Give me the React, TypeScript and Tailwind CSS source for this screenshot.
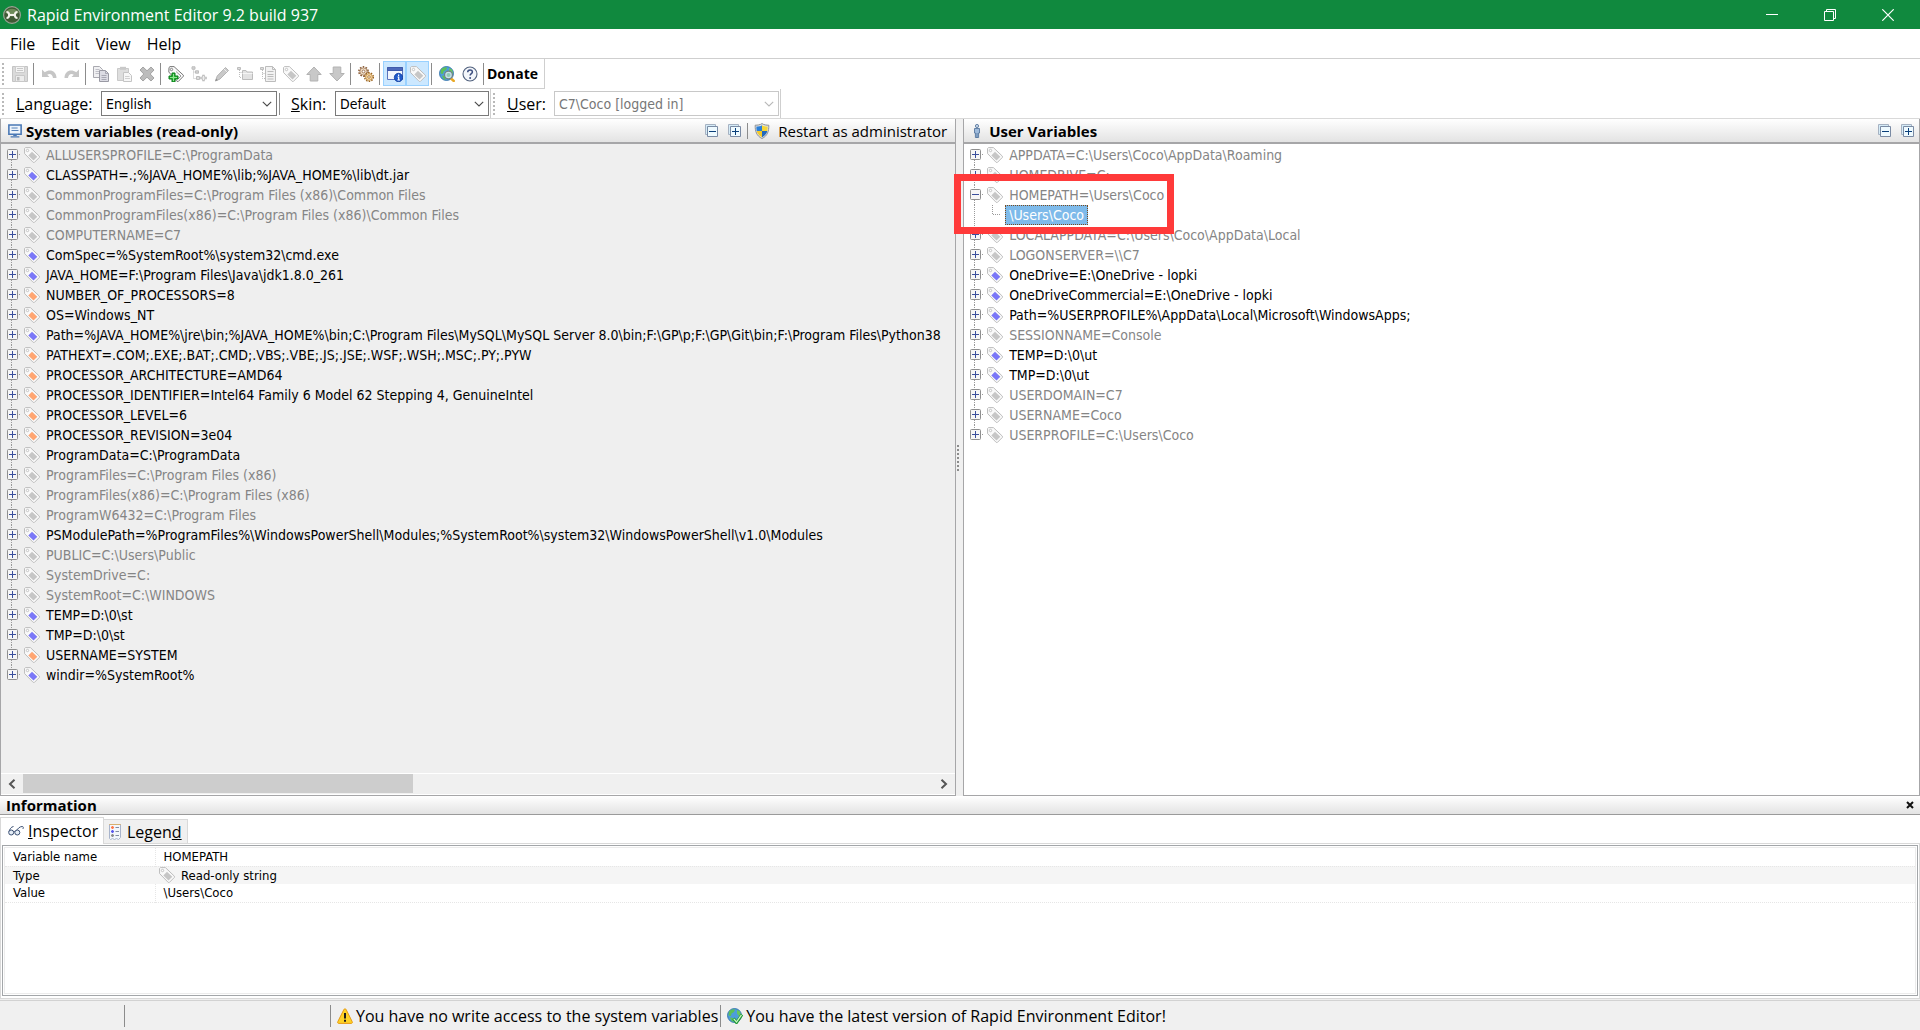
import type { ReactNode } from "react";
import clsx from "clsx";

type Kind = "readonly" | "expand" | "string" | "plain";

type Variable = {
  text: string;
  kind: Kind;
  value?: string;
};

const SYSTEM_VARIABLES: Variable[] = [
  { text: "ALLUSERSPROFILE=C:\\ProgramData", kind: "readonly" },
  { text: "CLASSPATH=.;%JAVA_HOME%\\lib;%JAVA_HOME%\\lib\\dt.jar", kind: "expand" },
  { text: "CommonProgramFiles=C:\\Program Files (x86)\\Common Files", kind: "readonly" },
  { text: "CommonProgramFiles(x86)=C:\\Program Files (x86)\\Common Files", kind: "readonly" },
  { text: "COMPUTERNAME=C7", kind: "readonly" },
  { text: "ComSpec=%SystemRoot%\\system32\\cmd.exe", kind: "expand" },
  { text: "JAVA_HOME=F:\\Program Files\\Java\\jdk1.8.0_261", kind: "expand" },
  { text: "NUMBER_OF_PROCESSORS=8", kind: "string" },
  { text: "OS=Windows_NT", kind: "string" },
  {
    text: "Path=%JAVA_HOME%\\jre\\bin;%JAVA_HOME%\\bin;C:\\Program Files\\MySQL\\MySQL Server 8.0\\bin;F:\\GP\\p;F:\\GP\\Git\\bin;F:\\Program Files\\Python38",
    kind: "expand",
  },
  { text: "PATHEXT=.COM;.EXE;.BAT;.CMD;.VBS;.VBE;.JS;.JSE;.WSF;.WSH;.MSC;.PY;.PYW", kind: "string" },
  { text: "PROCESSOR_ARCHITECTURE=AMD64", kind: "string" },
  { text: "PROCESSOR_IDENTIFIER=Intel64 Family 6 Model 62 Stepping 4, GenuineIntel", kind: "string" },
  { text: "PROCESSOR_LEVEL=6", kind: "string" },
  { text: "PROCESSOR_REVISION=3e04", kind: "string" },
  { text: "ProgramData=C:\\ProgramData", kind: "plain" },
  { text: "ProgramFiles=C:\\Program Files (x86)", kind: "readonly" },
  { text: "ProgramFiles(x86)=C:\\Program Files (x86)", kind: "readonly" },
  { text: "ProgramW6432=C:\\Program Files", kind: "readonly" },
  {
    text: "PSModulePath=%ProgramFiles%\\WindowsPowerShell\\Modules;%SystemRoot%\\system32\\WindowsPowerShell\\v1.0\\Modules",
    kind: "expand",
  },
  { text: "PUBLIC=C:\\Users\\Public", kind: "readonly" },
  { text: "SystemDrive=C:", kind: "readonly" },
  { text: "SystemRoot=C:\\WINDOWS", kind: "readonly" },
  { text: "TEMP=D:\\0\\st", kind: "expand" },
  { text: "TMP=D:\\0\\st", kind: "expand" },
  { text: "USERNAME=SYSTEM", kind: "string" },
  { text: "windir=%SystemRoot%", kind: "expand" },
];

const USER_VARIABLES: Variable[] = [
  { text: "APPDATA=C:\\Users\\Coco\\AppData\\Roaming", kind: "readonly" },
  { text: "HOMEDRIVE=C:", kind: "readonly" },
  { text: "HOMEPATH=\\Users\\Coco", kind: "readonly", value: "\\Users\\Coco" },
  { text: "LOCALAPPDATA=C:\\Users\\Coco\\AppData\\Local", kind: "readonly" },
  { text: "LOGONSERVER=\\\\C7", kind: "readonly" },
  { text: "OneDrive=E:\\OneDrive - lopki", kind: "expand" },
  { text: "OneDriveCommercial=E:\\OneDrive - lopki", kind: "expand" },
  { text: "Path=%USERPROFILE%\\AppData\\Local\\Microsoft\\WindowsApps;", kind: "expand" },
  { text: "SESSIONNAME=Console", kind: "readonly" },
  { text: "TEMP=D:\\0\\ut", kind: "expand" },
  { text: "TMP=D:\\0\\ut", kind: "expand" },
  { text: "USERDOMAIN=C7", kind: "readonly" },
  { text: "USERNAME=Coco", kind: "readonly" },
  { text: "USERPROFILE=C:\\Users\\Coco", kind: "readonly" },
];

const TAG_COLORS: Record<Kind, string> = {
  readonly: "#c6c6c6",
  plain: "#c6c6c6",
  expand: "#7a77f7",
  string: "#ffa571",
};

/* ── icons ── */

function Icon({ children, className = "size-4" }: { children: ReactNode; className?: string }) {
  return (
    <svg viewBox="0 0 16 16" fill="none" aria-hidden="true" className={clsx("shrink-0", className)}>
      {children}
    </svg>
  );
}

function TagIcon({ color = "#c6c6c6", stroke = "#bdbdbd" }: { color?: string; stroke?: string }) {
  return (
    <Icon>
      <path d="M.5 1.500 1.500.6 6.400.6 15.400 9.200 15.400 10.400 10.400 15.400 9.200 15.400.6 6.600Z" fill="#f9f9f9" stroke={stroke} />
      <circle cx="3.500" cy="3.500" r="1.200" fill="#fff" stroke={stroke} strokeWidth=".9" />
      <path d="m8 4.800 5.300 5-3.800 3.700-5.200-5.100Z" fill={color} />
    </Icon>
  );
}

function SaveIcon() {
  return (
    <Icon>
      <path d="M.5.5h15v15h-15Z" fill="#dadada" stroke="#c4c4c4" />
      <path d="M3.500.5h9v6h-9Z" fill="#f4f4f4" stroke="#ccc" />
      <path d="M5 2.500h6M5 4.500h6" stroke="#c8c8c8" />
      <path d="M3.500 9.500h9v6h-9Z" fill="#ececec" stroke="#c8c8c8" />
      <path d="M5 11h2.500v3.500H5Z" fill="#bdbdbd" />
    </Icon>
  );
}

function UndoIcon({ flip = false }: { flip?: boolean }) {
  return (
    <Icon className={clsx("size-4", flip && "-scale-x-100")}>
      <path d="M1 3.500V11h7.500L6.200 8.800C9 7.200 11.500 8.500 12 12h3.500C15.500 4.500 8.500 2.500 3.800 6.200Z" fill="#c6c6c6" />
    </Icon>
  );
}

function CopyIcon() {
  return (
    <Icon>
      <path d="M.5.5h6l3 3v8h-9Z" fill="#f0f0f2" stroke="#a9a9b0" />
      <path d="M2.500 3.500h4M2.500 5.500h5M2.500 7.500h5" stroke="#c0c0c8" />
      <path d="M6.500 4.500h6l3 3v8h-9Z" fill="#dcdce4" stroke="#9a9aa4" />
      <path d="M12.500 4.500v3h3M8.500 9.500h5M8.500 11.500h5M8.500 13.500h5" stroke="#a8a8b4" />
    </Icon>
  );
}

function PasteIcon() {
  return (
    <Icon>
      <path d="M1.500 2.500h11v12h-11Z" fill="#dedede" stroke="#c9c9c9" />
      <path d="M4 .8h6v3H4Z" fill="#c9c9c9" />
      <path d="M7.500 6.500h5l3 3v6h-8Z" fill="#f7f7f7" stroke="#c4c4c4" />
      <path d="M9 10.500h4.500M9 12.500h5" stroke="#d0d0d0" />
    </Icon>
  );
}

function DeleteIcon() {
  return (
    <Icon>
      <path
        d="M4 1 8 4.800 12 1l3 3-3.800 4 3.800 4-3 3-4-3.800L4 15l-3-3 3.800-4L1 4Z"
        fill="#bcbcbc"
        stroke="#a4a4a4"
      />
    </Icon>
  );
}

function AddTagIcon() {
  return (
    <Icon>
      <path d="M1 1.500 2 .6h4l9.400 8.600v1l-5 5.200H9L.8 6Z" fill="#fafafa" stroke="#777" />
      <circle cx="3.500" cy="3.500" r="1.200" stroke="#777" strokeWidth=".9" />
      <path d="M8 5.500 13 10l-3 3" stroke="#999" />
      <path d="M4 7h3v3h3v3H7v3H4v-3H1v-3h3Z" fill="#2bb638" stroke="#0b7d1a" />
      <path d="M5.500 8v7M2 11.500h7" stroke="#90e690" />
    </Icon>
  );
}

function AddChildIcon() {
  return (
    <Icon>
      <path d="M1 .8h3v2.400H1ZM4.500 4.800h3v2.400h-3Z" fill="#d4d4d4" stroke="#bdbdbd" />
      <path d="M2.500 3.500v9H5M2.500 6h2" stroke="#bdbdbd" strokeDasharray="1 1" />
      <path d="M5.500 10.500h3v3h-3Z" fill="#ddd" stroke="#bdbdbd" />
      <path d="M12.500 8.800v6.400M9.300 12h6.400" stroke="#b5b5b5" strokeWidth="2.400" />
      <path d="M12.500 9.800v4.400M10.300 12h4.400" stroke="#eee" />
    </Icon>
  );
}

function PencilIcon() {
  return (
    <Icon>
      <path d="m11.500 1.500 3 3L6 13l-4.500 2L3.200 10Z" fill="#c9c9c9" stroke="#b4b4b4" />
      <path d="m10 3 3 3" stroke="#eee" />
      <path d="m1.200 15.200 1-2.600 1.600 1.600Z" fill="#909090" />
    </Icon>
  );
}

function TreeFolderIcon() {
  return (
    <Icon>
      <path d="M.5 1.500h3v2h-3Z" fill="#ddd" stroke="#bdbdbd" />
      <path d="M2.500 4v7.500H5M2.500 6.500H5" stroke="#bdbdbd" strokeDasharray="1 1" />
      <path d="M5.500 4.500h3.500l1 1.500h5.500v7.500h-10Z" fill="#e2e2e2" stroke="#bcbcbc" />
      <path d="M5.500 7.500h10" stroke="#f5f5f5" />
    </Icon>
  );
}

function TreeListIcon() {
  return (
    <Icon>
      <path d="M.5 1.500h3v2h-3Z" fill="#ddd" stroke="#bdbdbd" />
      <path d="M2.500 4v8.500H5M2.500 7.500H5" stroke="#bdbdbd" strokeDasharray="1 1" />
      <path d="M5.500.5h7l3 3v12h-10Z" fill="#f2f2f2" stroke="#bcbcbc" />
      <path d="M12.500.5v3h3M7.500 5.500h6M7.500 8.500h6M7.500 10.500h6M7.500 13h6" stroke="#bcbcbc" />
    </Icon>
  );
}

function ArrowIcon({ down = false }: { down?: boolean }) {
  return (
    <Icon className={clsx("size-4", down && "rotate-180")}>
      <path d="m8 1 7.200 7.500h-3.400V15H4.200V8.500H.8Z" fill="#c8c8c8" stroke="#b2b2b2" />
    </Icon>
  );
}

function GearsIcon() {
  return (
    <Icon>
      <circle cx="5.500" cy="5.500" r="4.600" stroke="#8a5a34" strokeWidth="1.600" strokeDasharray="1.600 1.300" />
      <circle cx="5.500" cy="5.500" r="3.600" fill="#f0dcc4" stroke="#a07a58" strokeWidth=".8" />
      <circle cx="5.500" cy="5.500" r="1.400" fill="#fff" stroke="#8f6340" strokeWidth=".8" />
      <circle cx="11" cy="11" r="4.300" stroke="#9c6420" strokeWidth="1.500" strokeDasharray="1.500 1.200" />
      <circle cx="11" cy="11" r="3.400" fill="#fbd9a4" stroke="#b5843c" strokeWidth=".8" />
      <circle cx="11" cy="11" r="1.300" fill="#fff" stroke="#a06e2c" strokeWidth=".8" />
    </Icon>
  );
}

function InfoWindowIcon() {
  return (
    <Icon>
      <path d="M.5 1.500h15v12H.5Z" fill="#f3f6fd" stroke="#5a73bd" />
      <path d="M.5 1.500h15v3H.5Z" fill="#4d69bb" stroke="#405bab" />
      <circle cx="11.500" cy="11.500" r="4.200" fill="#2059c9" stroke="#123f9e" strokeWidth=".8" />
      <path d="M11.600 8.600v1.300M10.500 11h1.200v3M10.400 14h2.600" stroke="#fff" strokeWidth="1.200" />
    </Icon>
  );
}

function GlobeIcon({ badge }: { badge: "lens" | "check" }) {
  return (
    <Icon>
      <circle cx="7.500" cy="7.500" r="7" fill="#4d9ddb" stroke="#2a6ba5" strokeWidth=".8" />
      <path d="M2 3.500C4 1 7 .8 8 1.500L7 4 4.500 5.500 4 8 1.500 7.500Z" fill="#5cc058" />
      <path d="m10 2 3 1.500 1.200 4L12 8l-2-2.500Z" fill="#68c560" />
      <path d="m3 9.500 3 .5.500 4L4.500 13Z" fill="#5cc058" />
      {badge === "lens" ? (
        <>
          <path d="m12 12.500 2.800 2.500" stroke="#e9a825" strokeWidth="2.400" strokeLinecap="round" />
          <circle cx="9.500" cy="9" r="3.900" fill="#c7e3ea" stroke="#6f7f86" strokeWidth="1.200" />
          <circle cx="9.500" cy="9" r="2" fill="#8fc9b4" />
        </>
      ) : (
        <path d="m6.500 10.500 3 4 5.500-8" stroke="#1f9a35" strokeWidth="3" />
      )}
      {badge === "check" && <path d="m6.800 10.800 2.700 3.200 5-7.200" stroke="#c9f3c2" strokeWidth="1.300" />}
    </Icon>
  );
}

function HelpIcon() {
  return (
    <Icon>
      <circle cx="8" cy="8" r="7" fill="#f3f6fa" stroke="#51617e" strokeWidth="1.100" />
      <path
        d="M5.700 6.200C5.700 3.200 10.400 3.200 10.400 6c0 1.600-2.300 1.800-2.300 3.600"
        stroke="#3d4f80"
        strokeWidth="1.500"
      />
      <circle cx="8.100" cy="11.900" r="1" fill="#3d4f80" />
    </Icon>
  );
}

function CollapseIcon({ plus = false }: { plus?: boolean }) {
  return (
    <svg viewBox="0 0 13 13" fill="none" aria-hidden="true" className="size-[13px] shrink-0">
      <path d="M.5.5h10v10H.5Z" fill="#d5ecf8" stroke="#a6b2c2" />
      <path d="M2.500 2.500h10v10h-10Z" fill="#eefaff" stroke="#7a8ba4" />
      <path d="M4 7.500h7" stroke="#0a3f7a" />
      {plus && <path d="M7.500 4v7" stroke="#0a3f7a" />}
    </svg>
  );
}

function ShieldIcon() {
  return (
    <Icon>
      <path
        d="M8 .6C10 2 12.500 2.200 14.800 2.200 15 8 13.500 13 8 15.500 2.500 13 1 8 1.200 2.200 3.500 2.200 6 2 8 .6Z"
        fill="#e4e6e8"
        stroke="#8c9094"
      />
      <path d="M8 2.200V8H2.700C2.400 6.500 2.300 5 2.400 3.500 4.500 3.500 6.300 3.200 8 2.200Z" fill="#2a7fd8" />
      <path d="M8 2.200V8h5.300c.3-1.500.4-3 .3-4.500-2.100 0-3.900-.3-5.600-1.300Z" fill="#f6d637" />
      <path d="M2.700 8H8v6.300C5 12.800 3.400 10.700 2.700 8Z" fill="#f4c92a" />
      <path d="M13.300 8H8v6.300c3-1.500 4.600-3.600 5.300-6.300Z" fill="#2368bd" />
    </Icon>
  );
}

function MonitorIcon() {
  return (
    <Icon className="size-[14px]">
      <path d="M1 1.200h14v10.600H1Z" fill="#eef4fb" stroke="#4a78b5" strokeWidth="1.800" />
      <path d="M4 4.500h7M4 7.500h8" stroke="#5581ba" strokeWidth="1.200" />
      <path d="M6 12.500h4v1.200H6ZM3 14h10v1.400H3Z" fill="#4a78b5" />
    </Icon>
  );
}

function PersonIcon() {
  return (
    <svg viewBox="0 0 8 14" fill="none" aria-hidden="true" className="h-[14px] w-2 shrink-0">
      <circle cx="4" cy="2" r="1.600" fill="#c8d8ea" stroke="#4a6c95" strokeWidth=".8" />
      <path d="M1.500 4.500h5V9H5.600v4.500H2.400V9h-.9Z" fill="#9fbbdc" stroke="#4a6c95" strokeWidth=".8" />
      <path d="M4 9v4.500" stroke="#4a6c95" strokeWidth=".8" />
    </svg>
  );
}

function GlassesIcon() {
  return (
    <Icon>
      <path d="M1 9C1.500 6.500 3 3.800 5.500 3.500M8 8.500C9.500 5.500 12 3.300 14.500 3.500c1 .2 1 1.500.3 2.500" stroke="#3a4f73" />
      <circle cx="3.200" cy="9.500" r="2.500" fill="#e6eef7" stroke="#3a4f73" />
      <circle cx="9.300" cy="9.500" r="2.500" fill="#e6eef7" stroke="#3a4f73" />
      <path d="M5.600 9c.4-.6.800-.6 1.200 0" stroke="#3a4f73" />
    </Icon>
  );
}

function LegendIcon() {
  return (
    <Icon>
      <path d="M2.500.5h11v13l-2 2-2-1-2 1-2-1-2 1-1-1Z" fill="#f4f7fc" stroke="#a8b4cc" />
      <path d="M2.500 1v-.5h11V1" stroke="#d6b070" />
      <path d="M4 3.500h3M5.500 2v3" stroke="#ff7a4a" strokeWidth="1.400" />
      <path d="M4 7.500h3M5.500 6v3" stroke="#5c59ee" strokeWidth="1.400" />
      <path d="M4 11.500h3M5.500 10v3" stroke="#8d8d8d" strokeWidth="1.400" />
      <path d="M8.500 3.500H12M8.500 7.500H12M8.500 11.500H12" stroke="#7f8ba4" />
    </Icon>
  );
}

function WarningIcon() {
  return (
    <Icon>
      <path
        d="M8 .8c.6 0 .9.3 1.200.9l6 12c.5 1-.1 1.700-1 1.700H1.800c-.9 0-1.500-.7-1-1.700l6-12C7.100 1.100 7.400.8 8 .8Z"
        fill="#fdd227"
        stroke="#e69a14"
      />
      <path d="M8 5v5.500" stroke="#1c1c1c" strokeWidth="2" />
      <path d="M8 11.800v1.900" stroke="#1c1c1c" strokeWidth="2" />
    </Icon>
  );
}

function AppIcon() {
  return (
    <svg viewBox="0 0 18 18" fill="none" aria-hidden="true" className="size-[18px] shrink-0">
      <circle cx="9" cy="9" r="8.400" fill="#3f5a34" stroke="#9aa394" strokeWidth="1.200" />
      <path d="M2 6.500C5 1.500 13 1.500 16 6.500 12 9 6 9 2 6.500Z" fill="#6c8a58" />
      <path d="M6.500 9h5" stroke="#f2f2ea" strokeWidth="2.200" />
      <path d="M3.500 6C7 6 7 12 3.500 12M14.500 6C11 6 11 12 14.500 12" stroke="#f2f2ea" strokeWidth="2" />
    </svg>
  );
}

/* ── tree ── */

function Branch({ open, first, last }: { open?: boolean; first?: boolean; last?: boolean }) {
  return (
    <svg viewBox="0 0 23 20" fill="none" aria-hidden="true" className="h-5 w-[23px] shrink-0">
      {!first && <path d="M10.500 0v5" stroke="#9a9a9a" strokeDasharray="1 1" />}
      {!last && <path d="M10.500 15v5" stroke="#9a9a9a" strokeDasharray="1 1" />}
      <path d="M18 9.500h1" stroke="#9a9a9a" />
      <rect x="6.500" y="4.500" width="10" height="10" rx="1" fill="#f6f6f6" stroke="#8f8f8f" />
      <path d="M8 9.500h7" stroke="#3a4f9c" />
      {!open && <path d="M11.500 6v7" stroke="#3a4f9c" />}
    </svg>
  );
}

function TreeRow({ variable, first, last }: { variable: Variable; first: boolean; last: boolean }) {
  const open = variable.value !== undefined;
  return (
    <li className="relative" role="treeitem" aria-expanded={open}>
      <div className="flex h-5 items-center">
        <button type="button" aria-label={open ? "Collapse" : "Expand"}>
          <Branch open={open} first={first} last={last} />
        </button>
        <TagIcon color={TAG_COLORS[variable.kind]} />
        <span
          className={clsx("pl-1.5 leading-5 whitespace-nowrap", variable.kind === "readonly" ? "text-[#858585]" : "text-black")}
        >
          {variable.text}
        </span>
      </div>
      {open && (
        <>
          <div className="flex h-5 items-center">
            <svg viewBox="0 0 41 20" fill="none" aria-hidden="true" className="h-5 w-[41px] shrink-0">
              <path d="M10.500 0v20M28.500 0v10M29 9.500h8" stroke="#9a9a9a" strokeDasharray="1 1" />
            </svg>
            <span className="border border-dotted border-[#7a4a1c] bg-[#7ebaea] px-[3px] leading-[18px] text-white">
              {variable.value}
            </span>
          </div>
          {/* marker around the expanded variable */}
          <div className="pointer-events-none absolute -top-[11px] -left-[10px] z-10 h-[60px] w-[220px] border-[7px] border-[#ff3a3a]" />
        </>
      )}
    </li>
  );
}

function Tree({ label, items }: { label: string; items: Variable[] }) {
  return (
    <ul role="tree" aria-label={label} className="flex-1 pt-px font-['DejaVu_Sans_Condensed',sans-serif] text-sm">
      {items.map((item, i) => (
        <TreeRow key={item.text} variable={item} first={i === 0} last={i === items.length - 1} />
      ))}
    </ul>
  );
}

/* ── toolbar parts ── */

function ToolButton({
  label,
  active,
  disabled,
  children,
}: {
  label: string;
  active?: boolean;
  disabled?: boolean;
  children: ReactNode;
}) {
  return (
    <button
      type="button"
      aria-label={label}
      disabled={disabled}
      className={clsx(
        "flex h-[25px] w-[23px] items-center justify-center border",
        active ? "border-[#99d1ff] bg-[#cce8ff]" : "border-transparent",
      )}
    >
      {children}
    </button>
  );
}

function Divider() {
  return <span className="mr-[3px] ml-[2px] h-[22px] w-px shrink-0 bg-[#8c8c8c]" />;
}

function Grip() {
  return <span className="ml-0.5 h-[22px] w-0 border-l-2 border-dotted border-[#b9b9b9]" />;
}

function Combo({ id, value, disabled, className }: { id: string; value: string; disabled?: boolean; className: string }) {
  return (
    <span className={clsx("relative flex", className)}>
      <select
        id={id}
        disabled={disabled}
        defaultValue={value}
        className={clsx(
          "h-[25px] w-full appearance-none border bg-white pl-1 font-['DejaVu_Sans_Condensed',sans-serif] text-sm opacity-100",
          disabled ? "border-[#c8c8c8] text-[#777]" : "border-[#7a7a7a] text-black",
        )}
      >
        <option>{value}</option>
      </select>
      <svg
        viewBox="0 0 10 6"
        fill="none"
        aria-hidden="true"
        className="pointer-events-none absolute top-[10px] right-[5px] h-1.5 w-2.5"
      >
        <path d="m.8.8 4.200 4.200L9.200.8" stroke={disabled ? "#b8b8b8" : "#4a4a4a"} strokeWidth="1.100" />
      </svg>
    </span>
  );
}

function PaneHeader({ icon, title, children }: { icon: ReactNode; title: string; children?: ReactNode }) {
  return (
    <div className="flex h-[25px] items-center border-b-2 border-[#a6a6a8] bg-linear-to-b from-white to-[#e3e3e3]">
      {icon}
      <h2 className="flex-1 pl-1 text-[15px] leading-5 font-bold">{title}</h2>
      {children}
    </div>
  );
}

function TitleBar() {
  return (
    <header className="flex h-[29px] items-center bg-[#10893e] pl-[3px] text-white">
      <AppIcon />
      <h1 className="flex-1 pl-1.5 text-base leading-5">Rapid Environment Editor 9.2 build 937</h1>
      <button type="button" aria-label="Minimize" className="flex h-full w-[58px] items-center justify-center">
        <svg viewBox="0 0 12 12" className="size-3" stroke="currentColor" fill="none">
          <path d="M0 5.500h12" />
        </svg>
      </button>
      <button type="button" aria-label="Restore" className="flex h-full w-[58px] items-center justify-center">
        <svg viewBox="0 0 12 12" className="size-3" stroke="currentColor" fill="none">
          <path d="M.5 2.500h9v9h-9ZM2.500 2.500v-2h9v9h-2" />
        </svg>
      </button>
      <button type="button" aria-label="Close" className="mr-[3px] flex h-full w-[58px] items-center justify-center">
        <svg viewBox="0 0 12 12" className="size-3" stroke="currentColor" fill="none" strokeWidth="1.200">
          <path d="m.3.3 11.400 11.400M11.700.3.3 11.700" />
        </svg>
      </button>
    </header>
  );
}

function Toolbars() {
  return (
    <div className="border-b border-[#d9d9d9]">
      <div className="flex">
        <div className="flex h-[30px] items-center border-r border-b border-[#cfcfcf] pr-1.5">
          <Grip />
          <span className="w-1" />
          <ToolButton label="Save" disabled><SaveIcon /></ToolButton>
          <Divider />
          <ToolButton label="Undo" disabled><UndoIcon /></ToolButton>
          <ToolButton label="Redo" disabled><UndoIcon flip /></ToolButton>
          <Divider />
          <ToolButton label="Copy" disabled><CopyIcon /></ToolButton>
          <ToolButton label="Paste" disabled><PasteIcon /></ToolButton>
          <ToolButton label="Delete" disabled><DeleteIcon /></ToolButton>
          <Divider />
          <ToolButton label="Add variable"><AddTagIcon /></ToolButton>
          <ToolButton label="Add value" disabled><AddChildIcon /></ToolButton>
          <ToolButton label="Edit" disabled><PencilIcon /></ToolButton>
          <ToolButton label="Insert directory" disabled><TreeFolderIcon /></ToolButton>
          <ToolButton label="Insert file" disabled><TreeListIcon /></ToolButton>
          <ToolButton label="Variable type" disabled><TagIcon /></ToolButton>
          <ToolButton label="Move up" disabled><ArrowIcon /></ToolButton>
          <ToolButton label="Move down" disabled><ArrowIcon down /></ToolButton>
          <Divider />
          <ToolButton label="Options"><GearsIcon /></ToolButton>
          <Divider />
          <ToolButton label="Information pane" active><InfoWindowIcon /></ToolButton>
          <ToolButton label="Read-only variables" active><TagIcon /></ToolButton>
          <Divider />
          <ToolButton label="Check for updates"><GlobeIcon badge="lens" /></ToolButton>
          <ToolButton label="Help"><HelpIcon /></ToolButton>
          <Divider />
          <button type="button" className="text-sm font-bold">Donate</button>
        </div>
      </div>
      <div className="flex">
        <div className="flex h-[29px] items-center border-r border-[#cfcfcf] pr-px">
          <Grip />
          <label htmlFor="language" className="w-[97px] pl-3">
            <u>L</u>anguage:
          </label>
          <Combo id="language" value="English" className="w-[176px]" />
          <Divider />
          <label htmlFor="skin" className="w-[52px] pl-2">
            <u>S</u>kin:
          </label>
          <Combo id="skin" value="Default" className="w-[154px]" />
        </div>
        <div className="flex h-[29px] items-center border-r border-[#cfcfcf] pr-px">
          <Grip />
          <label htmlFor="user" className="w-[59px] pl-3">
            <u>U</u>ser:
          </label>
          <Combo id="user" value="C7\Coco [logged in]" disabled className="w-[225px]" />
        </div>
      </div>
    </div>
  );
}

function ScrollBar() {
  return (
    <div className="flex h-[22px] border-y border-white bg-[#f0f0f0]">
      <button type="button" aria-label="Scroll left" className="flex w-[22px] items-center justify-center">
        <svg viewBox="0 0 8 10" className="h-2.5 w-2" fill="none" stroke="#555" strokeWidth="2">
          <path d="M6.500.8 2 5l4.500 4.200" />
        </svg>
      </button>
      <div className="flex-1">
        <div className="h-[19px] w-3/7 bg-[#cdcdcd]" />
      </div>
      <button type="button" aria-label="Scroll right" className="flex w-[22px] items-center justify-center">
        <svg viewBox="0 0 8 10" className="h-2.5 w-2" fill="none" stroke="#555" strokeWidth="2">
          <path d="M1.500.8 6 5 1.500 9.200" />
        </svg>
      </button>
    </div>
  );
}

function InformationPane() {
  return (
    <section className="bg-white">
      <div className="flex h-[19px] items-center border-b border-[#9a9a9a] bg-linear-to-b from-white to-[#e3e3e3] px-1.5">
        <h2 className="flex-1 text-[15px] leading-[18px] font-bold">Information</h2>
        <button type="button" aria-label="Close information pane">
          <svg viewBox="0 0 8 8" className="size-2" stroke="#111" strokeWidth="2">
            <path d="m1 1 6 6M7 1 1 7" />
          </svg>
        </button>
      </div>

      <div role="tablist" className="flex items-end pt-0.5">
        <button
          type="button"
          role="tab"
          aria-selected="true"
          className="flex h-[27px] w-[104px] items-center gap-1 border-t border-r border-l border-[#d9d9d9] pl-[7px]"
        >
          <GlassesIcon />
          <span><u>I</u>nspector</span>
        </button>
        <button
          type="button"
          role="tab"
          aria-selected="false"
          className="flex h-[25px] w-[84px] items-center gap-1 border-t border-r border-b border-[#d9d9d9] bg-[#f0f0f0] pl-[3px]"
        >
          <LegendIcon />
          <span>Legen<u>d</u></span>
        </button>
        <span className="flex-1 border-b border-[#d9d9d9]" />
      </div>

      <div className="border-x border-b border-[#d9d9d9] px-px pt-px pb-0.5">
        <div className="h-[151px] border border-[#a3a6a9] p-px">
          <div className="h-full border border-[#ececec]">
            <table className="w-full table-fixed border-collapse font-['DejaVu_Sans_Condensed',sans-serif] text-[13px] leading-[17px]">
              <tbody>
                <tr className="h-[18px] border-b border-dotted border-[#e6e6e6]">
                  <th className="w-[150px] border-r border-dotted border-[#e6e6e6] py-0 pl-2 text-left font-normal">Variable name</th>
                  <td className="py-0 pl-2">HOMEPATH</td>
                </tr>
                <tr className="h-[18px] bg-[#f5f5f5]">
                  <th className="py-0 pl-2 text-left font-normal">Type</th>
                  <td className="py-0 pl-1">
                    <span className="flex items-center gap-1.5">
                      <TagIcon />
                      Read-only string
                    </span>
                  </td>
                </tr>
                <tr className="h-[18px] border-b border-dotted border-[#e6e6e6]">
                  <th className="border-r border-dotted border-[#e6e6e6] py-0 pl-2 text-left font-normal">Value</th>
                  <td className="py-0 pl-2">\Users\Coco</td>
                </tr>
              </tbody>
            </table>
          </div>
        </div>
      </div>
    </section>
  );
}

function StatusBar() {
  return (
    <footer className="mt-px flex h-[30px] items-center border-t border-[#d2d2d2] text-base leading-5">
      <span className="h-[22px] w-[125px] border-r border-[#8c8c8c]" />
      <span className="h-[22px] w-[206px] border-r border-[#8c8c8c]" />
      <span className="flex h-[22px] items-center gap-[3px] border-r border-[#8c8c8c] pr-0.5 pl-1.5">
        <WarningIcon />
        You have no write access to the system variables
      </span>
      <span className="flex items-center gap-[3px] pl-1.5">
        <GlobeIcon badge="check" />
        You have the latest version of Rapid Environment Editor!
      </span>
    </footer>
  );
}

export default function App() {
  return (
    <div className="flex min-h-screen flex-col bg-[#f0f0f0] font-['Open_Sans',sans-serif] text-base leading-5 text-black">
      <TitleBar />
      <div className="bg-white">
        <nav className="flex h-[30px] items-center border-b border-[#cfcfcf] pl-0.5">
          {["File", "Edit", "View", "Help"].map((item) => (
            <button key={item} type="button" className="px-2">
              {item}
            </button>
          ))}
        </nav>
        <Toolbars />
      </div>

      <main className="flex flex-1">
        <section className="flex w-[49.8%] flex-col overflow-hidden border-r border-b border-l border-[#a6a6a8] bg-[#efefef]">
          <PaneHeader icon={<span className="pl-[7px]"><MonitorIcon /></span>} title="System variables (read-only)">
            <div className="flex items-center">
              <button type="button" aria-label="Collapse all"><CollapseIcon /></button>
              <button type="button" aria-label="Expand all" className="ml-2.5"><CollapseIcon plus /></button>
              <span className="ml-1.5 h-4 w-px bg-[#8c8c8c]" />
              <button type="button" className="ml-1.5 flex items-center gap-2 pr-2 text-[15px]">
                <ShieldIcon />
                Restart as administrator
              </button>
            </div>
          </PaneHeader>
          <Tree label="System variables" items={SYSTEM_VARIABLES} />
          <ScrollBar />
        </section>

        {/* splitter */}
        <div className="flex w-[7px] items-center pl-px">
          <span className="h-[26px] border-l-2 border-dotted border-[#8c8c8c]" />
        </div>

        <section className="flex min-w-0 flex-1 flex-col border-r border-b border-l border-[#a6a6a8] bg-white">
          <PaneHeader icon={<span className="pr-1 pl-[9px]"><PersonIcon /></span>} title="User Variables">
            <div className="flex items-center pr-[5px]">
              <button type="button" aria-label="Collapse all"><CollapseIcon /></button>
              <button type="button" aria-label="Expand all" className="ml-2.5"><CollapseIcon plus /></button>
            </div>
          </PaneHeader>
          <Tree label="User variables" items={USER_VARIABLES} />
        </section>
      </main>

      <InformationPane />
      <StatusBar />
    </div>
  );
}
